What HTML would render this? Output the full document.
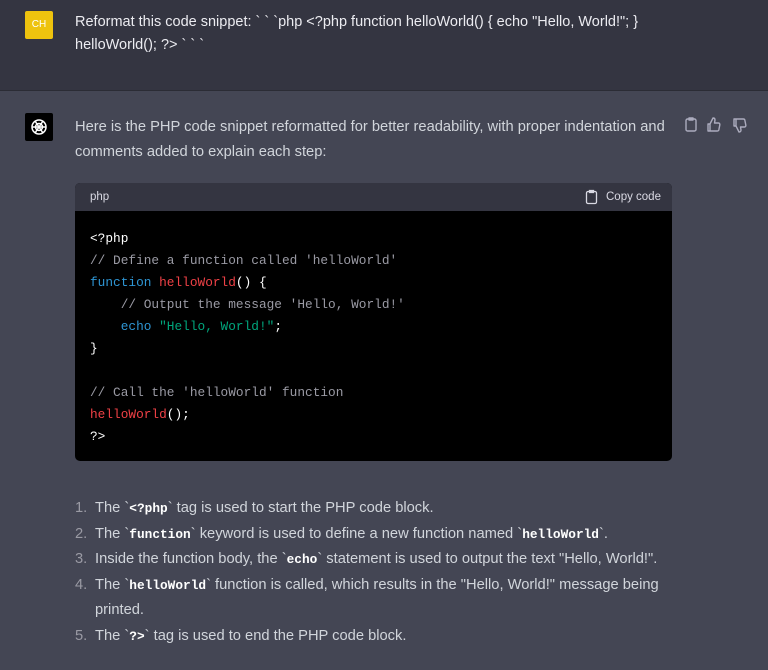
<!DOCTYPE html>
<html><head><meta charset="utf-8"><style>
*{margin:0;padding:0;box-sizing:border-box}
body{width:768px;height:670px;overflow:hidden;background:#444654;font-family:"Liberation Sans",sans-serif;color:#d1d5db;font-size:14.7px}
.user{position:absolute;left:0;top:0;width:768px;height:91px;background:#343541;border-bottom:1px solid #2b2c35}
.av{position:absolute;width:28px;height:28px;border-radius:2px}
.t{position:absolute;left:75px;line-height:23px;color:#ececf1}
.code{position:absolute;left:75px;top:183px;width:597px;height:278px;border-radius:5px;overflow:hidden;background:#000}
.ch{height:28px;background:#343541;font-size:11.5px;color:#d9d9e3;position:relative}
pre{font-family:"Liberation Mono",monospace;font-size:12.8px;line-height:22px;color:#fff;padding:17px 15px}
.c{color:#9a9aa4}.k{color:#2e95d3}.s{color:#00a67d}
ol{position:absolute;left:75px;top:496px;list-style:none;line-height:25.6px;font-size:14.7px}
ol li{padding-left:20px;position:relative}
ol li span.n{position:absolute;left:0;color:#9a9aa4}
code{font-family:"Liberation Mono",monospace;font-weight:bold;font-size:12.8px;color:#fff}
</style></head><body>
<div class="user">
<div class="av" style="left:25px;top:11px;background:#eec30e;color:#fff;font-size:10px;text-align:center;line-height:28px">CH</div>
<div class="t" style="top:11px;width:610px;font-size:14.5px">Reformat this code snippet: ` ` `php &lt;?php function helloWorld() { echo "Hello, World!"; } helloWorld(); ?&gt; ` ` `</div>
</div>
<div class="av" style="left:25px;top:113px;background:#000">
<svg width="28" height="28" viewBox="0 0 28 28" fill="none" stroke="#fff" stroke-width="1.5"><circle cx="14" cy="14" r="7"/><circle cx="14" cy="14" r="3.5"/><path d="M10 8l8 12M18 8l-8 12M7 14h14"/></svg></div>
<div class="t" style="top:115px;width:610px;line-height:24.5px;color:#d1d5db">Here is the PHP code snippet reformatted for better readability, with proper indentation and comments added to explain each step:</div>
<svg style="position:absolute;left:684px;top:116px" width="70" height="18" viewBox="0 0 70 18" fill="none" stroke="#acacbe" stroke-width="1.4" stroke-linejoin="round">
<rect x="2" y="3" width="10" height="12" rx="1.5"/><path d="M5 2h4v2H5z"/>
<path d="M26 8v7h-2V8zM26 8l3-6c1.5 0 2 1 2 2l-.5 3h4c1 0 1.5 1 1.3 2l-1 5c-.2.8-.8 1-1.5 1H26"/>
<path d="M52 10V3h-2v7zM52 10l3 6c1.5 0 2-1 2-2l-.5-3h4c1 0 1.5-1 1.3-2l-1-5c-.2-.8-.8-1-1.5-1H52"/>
</svg>
<div class="code">
<div class="ch"><span style="position:absolute;left:15px;top:8px">php</span>
<svg style="position:absolute;left:510px;top:6px" width="14" height="16" viewBox="0 0 14 16" fill="none" stroke="#d9d9e3" stroke-width="1.3"><rect x="1.5" y="2.5" width="10" height="12" rx="1.5"/><path d="M4.5 1.5h4v2h-4z"/></svg>
<span style="position:absolute;left:531px;top:8px">Copy code</span></div>
<pre>&lt;?php
<span class="c">// Define a function called 'helloWorld'</span>
<span class="k">function</span> <span style="color:#ef4146">helloWorld</span>() {
    <span class="c">// Output the message 'Hello, World!'</span>
    <span class="k">echo</span> <span class="s">"Hello, World!"</span>;
}

<span class="c">// Call the 'helloWorld' function</span>
<span style="color:#ef4146">helloWorld</span>();
?&gt;</pre>
</div>
<ol>
<li><span class="n">1.</span>The `<code>&lt;?php</code>` tag is used to start the PHP code block.</li>
<li><span class="n">2.</span>The `<code>function</code>` keyword is used to define a new function named `<code>helloWorld</code>`.</li>
<li><span class="n">3.</span>Inside the function body, the `<code>echo</code>` statement is used to output the text "Hello, World!".</li>
<li><span class="n">4.</span>The `<code>helloWorld</code>` function is called, which results in the "Hello, World!" message being<br>printed.</li>
<li><span class="n">5.</span>The `<code>?&gt;</code>` tag is used to end the PHP code block.</li>
</ol>
</body></html>
